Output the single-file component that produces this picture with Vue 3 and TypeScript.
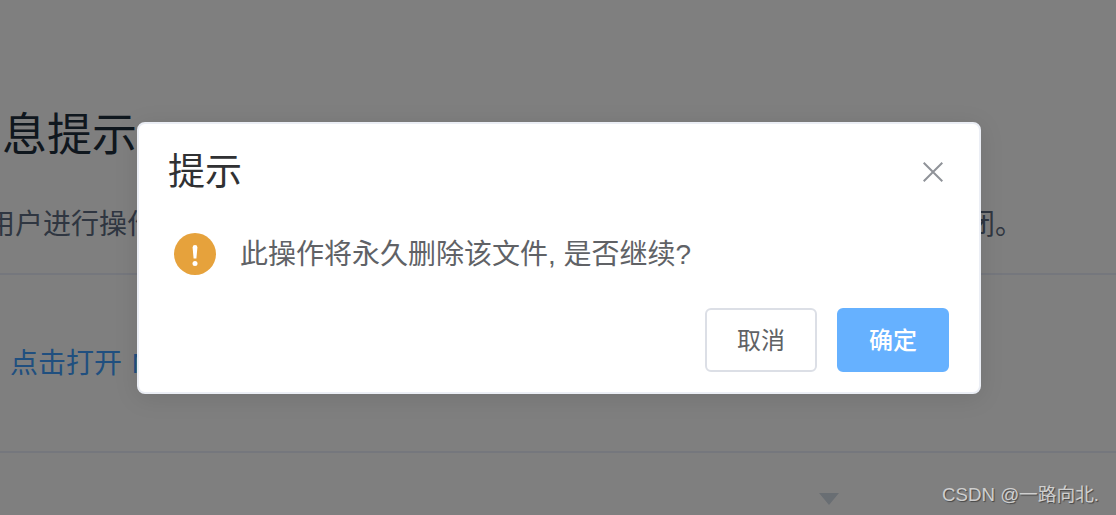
<script setup lang="ts">
const title = '提示'
const message = '此操作将永久删除该文件, 是否继续?'
</script>

<template>
  <div class="page">
    <main class="doc">
      <h2 class="heading">消息提示</h2>
      <p class="desc">当用户进行操作时会被触发，该对话框中断用户操作，直到用户确认知晓后才可关闭。</p>
      <div class="demo">
        <a class="link">点击打开 Message Box</a>
      </div>
      <div class="foot">
        <svg class="caret" width="20" height="12" viewBox="0 0 20 12"><path d="M0 0h20L10 12z" fill="#d3dce6" /></svg>
      </div>
    </main>

    <div class="overlay">
      <section class="box">
        <header class="box-head">
          <span class="box-title">{{ title }}</span>
          <svg class="close" width="20" height="20" viewBox="0 0 20 20">
            <path d="M.7.7l18.6 18.6M19.3.7L.7 19.3" stroke="#909399" stroke-width="2" fill="none" />
          </svg>
        </header>
        <div class="box-body">
          <svg class="warn" width="42" height="42" viewBox="0 0 42 42">
            <circle cx="21" cy="21" r="21" fill="#e6a23c" />
            <path d="M18.6 14.4a2.4 2.4 0 0 1 4.8 0l-1 11.2h-2.8z" fill="#fff" />
            <circle cx="21" cy="30.4" r="2.5" fill="#fff" />
          </svg>
          <p class="msg">{{ message }}</p>
        </div>
        <footer class="box-foot">
          <button class="btn">取消</button>
          <button class="btn primary">确定</button>
        </footer>
      </section>
    </div>

    <span class="mark">CSDN @一路向北.</span>
  </div>
</template>

<style>
html, body { margin: 0; overflow: hidden; }
</style>

<style scoped>
.page {
  position: relative;
  width: 1116px;
  height: 515px;
  overflow: hidden;
  background: #fff;
  font-family: "Liberation Sans", "Noto Sans CJK SC", sans-serif;
}
.doc {
  display: flex;
  flex-direction: column;
  padding-top: 114px;
  white-space: nowrap;
}
.heading {
  margin: 0 0 0 -43px;
  font-size: 45px;
  font-weight: 400;
  line-height: 44px;
  color: #1f2f3d;
}
.desc {
  margin: 53px 0 0 -41px;
  font-size: 28px;
  line-height: 28px;
  color: #5e6d82;
}
.demo {
  margin-top: 34px;
  height: 180px;
  box-sizing: border-box;
  padding: 75px 0 0 10px;
  border-top: 2px solid #eaeefb;
  border-bottom: 2px solid #eaeefb;
}
.link {
  font-size: 28px;
  line-height: 28px;
  word-spacing: 2px;
  color: #409eff;
}
.foot {
  padding: 40px 0 0 819px;
}
.caret { display: block; }
.overlay {
  position: absolute;
  inset: 0;
  box-sizing: border-box;
  padding: 1px 0 0 2px;
  display: flex;
  align-items: center;
  justify-content: center;
  background: rgba(0, 0, 0, 0.5);
}
.box {
  width: 844px;
  height: 272px;
  box-sizing: border-box;
  padding: 30px 30px 20px;
  background: #fff;
  border: 2px solid #ebeef5;
  border-radius: 8px;
  box-shadow: 0 4px 24px rgba(0, 0, 0, 0.1);
}
.box-head {
  display: flex;
  align-items: center;
  justify-content: space-between;
  height: 36px;
}
.box-title {
  margin-left: -1px;
  padding-top: 2px;
  font-size: 37px;
  line-height: 36px;
  color: #303133;
}
.close { margin-right: 6px; }
.box-body {
  display: flex;
  align-items: center;
  gap: 24px;
  margin-top: 43px;
  padding-left: 5px;
  height: 42px;
}
.warn { flex: none; }
.msg {
  margin: 0;
  padding-top: 2px;
  font-size: 28px;
  line-height: 42px;
  color: #606266;
}
.box-foot {
  display: flex;
  justify-content: flex-end;
  gap: 20px;
  margin-top: 33px;
}
.btn {
  width: 112px;
  height: 64px;
  padding: 0 0 4px;
  box-sizing: border-box;
  border: 2px solid #dcdfe6;
  border-radius: 6px;
  background: #fff;
  color: #606266;
  font-family: inherit;
  font-size: 24px;
}
.btn.primary {
  border-color: #66b1ff;
  background: #66b1ff;
  color: #fff;
  font-weight: 500;
}
.mark {
  position: absolute;
  left: 942px;
  top: 483px;
  font-size: 18.7px;
  line-height: 24px;
  white-space: nowrap;
  color: #cfcfcf;
  text-shadow: 1px 1px 1px rgba(0, 0, 0, 0.45);
}
</style>
